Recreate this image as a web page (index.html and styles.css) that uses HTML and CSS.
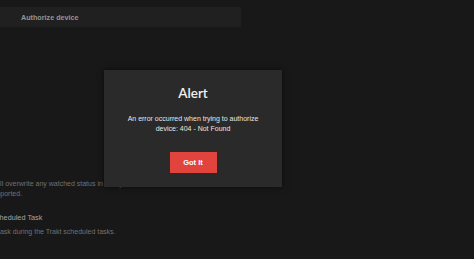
FILE: index.html
```html
<!DOCTYPE html>
<html>
<head>
<meta charset="utf-8">
<link rel="stylesheet" href="styles.css">
</head>
<body>
<div class="page">
  <div class="toolbar"><span class="toolbar-label">Authorize device</span></div>
  <div class="settings">
    <p class="desc line-a">will overwrite any watched status in Emby</p>
    <p class="desc line-b">supported.</p>
    <p class="task-title">Scheduled Task</p>
    <p class="desc line-d">task during the Trakt scheduled tasks.</p>
  </div>
</div>
<div class="overlay">
  <div class="dialog">
    <h1 class="dialog-title">Alert</h1>
    <p class="dialog-text">An error occurred when trying to authorize device: 404 - Not Found</p>
    <button class="dialog-btn">Got It</button>
  </div>
</div>
</body>
</html>
```
FILE: styles.css
```css
html, body {
  margin: 0;
  padding: 0;
  background: #181818;
  width: 474px;
  height: 259px;
  overflow: hidden;
  font-family: "Liberation Sans", Arial, sans-serif;
}
.page {
  padding-top: 7px;
}
.toolbar {
  width: 241px;
  height: 20px;
  background: #202020;
  display: flex;
  align-items: center;
  padding-left: 21px;
  box-sizing: border-box;
}
.toolbar-label {
  color: #959595;
  font-weight: bold;
  font-size: 7.2px;
}
.settings {
  margin-top: 152px;
}
.desc {
  margin: 0;
  font-size: 7px;
  color: #727272;
  line-height: 10px;
  white-space: nowrap;
}
.line-a {
  margin-left: -6.5px;
}
.line-b {
  margin-left: -11px;
  margin-bottom: 14px;
}
.task-title {
  margin: 0 0 4px -9px;
  font-size: 7.3px;
  color: #a4a4a4;
  line-height: 10px;
}
.line-d {
  margin-left: -2px;
}
.overlay {
  position: absolute;
  left: 0;
  top: 0;
  width: 474px;
  height: 259px;
}
.dialog {
  position: absolute;
  left: 104px;
  top: 70px;
  width: 178px;
  height: 117px;
  background: #2a2a2a;
  box-shadow: 0 0 6px rgba(0,0,0,0.6);
  display: flex;
  flex-direction: column;
  align-items: center;
  box-sizing: border-box;
  padding-top: 14px;
}
.dialog-title {
  margin: 0;
  font-family: Lato, "Open Sans", sans-serif;
  font-weight: 600;
  font-size: 13.5px;
  line-height: 18px;
  color: #f0f0f0;
}
.dialog-text {
  margin: 12px 0 0 0;
  width: 150px;
  text-align: center;
  font-size: 7px;
  line-height: 10px;
  color: #e6e6e6;
}
.dialog-btn {
  margin-top: 18px;
  width: 47px;
  height: 21px;
  border: none;
  background: #e0443c;
  color: #fff;
  font-family: "Liberation Sans", Arial, sans-serif;
  font-weight: bold;
  font-size: 7.5px;
  padding: 0;
}
```
